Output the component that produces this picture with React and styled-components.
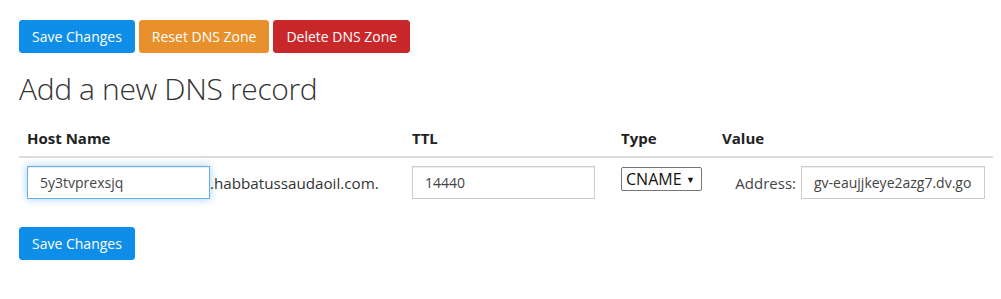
import React from "react";
import styled, { createGlobalStyle } from "styled-components";

const Global = createGlobalStyle`
  html, body { margin: 0; padding: 0; background: #fff; }
  body { font-family: "Open Sans", "Liberation Sans", sans-serif; color: #333; font-size: 14px; }
  * { box-sizing: border-box; }
`;

const Page = styled.div`
  padding: 20px 8px 0 19px;
`;

const Toolbar = styled.div`
  display: flex;
  gap: 4px;
`;

const colors = {
  primary: "#0e8ee8",
  warning: "#e8912c",
  danger: "#c9282b",
};

const Button = styled.button`
  font-family: "Open Sans", "Liberation Sans", sans-serif;
  font-size: 14px;
  line-height: 19px;
  padding: 6px 12px;
  color: #fff;
  background: ${(p) => colors[p.$variant || "primary"]};
  border: 1px solid ${(p) => colors[p.$variant || "primary"]};
  border-radius: 3px;
  cursor: pointer;
`;

const Heading = styled.h2`
  font-family: "Open Sans", "Liberation Sans", sans-serif;
  font-weight: 300;
  font-size: 30px;
  line-height: 33px;
  color: #333;
  margin: 19px 0 15px;
  letter-spacing: -0.35px;
`;

const Table = styled.table`
  width: 974px;
  border-collapse: collapse;
  table-layout: fixed;
`;

const Th = styled.th`
  text-align: left;
  font-weight: 700;
  font-size: 15px;
  line-height: 20px;
  padding: 8px;
  color: #222;
  border-bottom: 2px solid #ddd;
`;

const Td = styled.td`
  padding: 8px;
  vertical-align: top;
  font-size: 14px;
`;

const Inline = styled.div`
  display: flex;
  align-items: center;
  justify-content: ${(p) => (p.$end ? "flex-end" : "flex-start")};
  gap: ${(p) => p.$gap || 0}px;
  height: 33px;
`;

const Input = styled.input`
  width: ${(p) => p.$w || 183}px;
  height: 33px;
  padding: 6px 12px;
  font-family: "Open Sans", "Liberation Sans", sans-serif;
  font-size: 14px;
  color: #444;
  border: 1px solid ${(p) => (p.$focus ? "#66afe9" : "#ccc")};
  border-radius: 0;
  outline: none;
  box-shadow: ${(p) =>
    p.$focus ? "inset 0 1px 1px rgba(0,0,0,.075), 0 0 8px rgba(102,175,233,.6)" : "inset 0 1px 1px rgba(0,0,0,.075)"};
`;

const Suffix = styled.span`
  font-size: 15.2px;
  color: #333;
`;

const SelectBox = styled.div`
  display: inline-flex;
  align-items: center;
  justify-content: space-between;
  width: 81px;
  height: 24px;
  margin-top: 1px;
  padding: 0 6px 0 4px;
  border: 1px solid #767676;
  border-radius: 2px;
  background: #fff;
  font-family: "Open Sans", "Liberation Sans", sans-serif;
  font-size: 16px;
  color: #111;
`;

const Caret = styled.span`
  font-size: 9px;
  color: #111;
`;

const Label = styled.span`
  font-size: 15px;
  color: #444;
`;

const Footer = styled.div`
  margin-top: 20px;
`;

export default function App() {
  return (
    <>
      <Global />
      <Page>
        <Toolbar>
          <Button $variant="primary">Save Changes</Button>
          <Button $variant="warning">Reset DNS Zone</Button>
          <Button $variant="danger">Delete DNS Zone</Button>
        </Toolbar>
        <Heading>Add a new DNS record</Heading>
        <Table>
          <colgroup>
            <col style={{ width: 385 }} />
            <col style={{ width: 209 }} />
            <col style={{ width: 101 }} />
            <col />
          </colgroup>
          <thead>
            <tr>
              <Th>Host Name</Th>
              <Th>TTL</Th>
              <Th>Type</Th>
              <Th>Value</Th>
            </tr>
          </thead>
          <tbody>
            <tr>
              <Td>
                <Inline>
                  <Input $focus defaultValue="5y3tvprexsjq" />
                  <Suffix>.habbatussaudaoil.com.</Suffix>
                </Inline>
              </Td>
              <Td>
                <Inline>
                  <Input defaultValue="14440" />
                </Inline>
              </Td>
              <Td>
                <SelectBox>
                  CNAME <Caret>▼</Caret>
                </SelectBox>
              </Td>
              <Td>
                <Inline $end $gap={5}>
                  <Label>Address:</Label>
                  <Input $w={184} defaultValue="gv-eaujjkeye2azg7.dv.go" />
                </Inline>
              </Td>
            </tr>
          </tbody>
        </Table>
        <Footer>
          <Button $variant="primary">Save Changes</Button>
        </Footer>
      </Page>
    </>
  );
}
